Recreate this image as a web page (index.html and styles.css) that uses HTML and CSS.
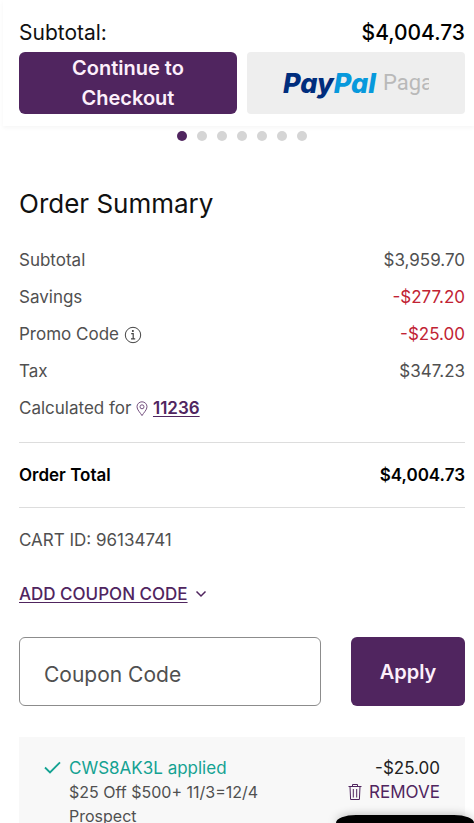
FILE: index.html
```html
<!DOCTYPE html>
<html lang="en">
<head>
  <meta charset="UTF-8" />
  <meta name="viewport" content="width=device-width, initial-scale=1.0"/>
  <title>Shopping Cart</title>
  <link rel="stylesheet" href="styles.css">
</head>
<body>
  <!-- checkout bar -->
  <header class="checkout-bar">
    <div class="bar-subtotal">
      <span>Subtotal:</span>
      <span class="bar-amount">$4,004.73</span>
    </div>
    <div class="bar-buttons">
      <button type="button" class="btn checkout-btn">Continue to<br>Checkout</button>
      <button type="button" class="paypal-btn">
        <span class="paypal-logo">Pay<span class="pal">Pal</span></span>
        <span class="paypal-text">Pagar</span>
      </button>
    </div>
  </header>

  <main>
    <div class="dots">
      <span class="dot active"></span>
      <span class="dot"></span>
      <span class="dot"></span>
      <span class="dot"></span>
      <span class="dot"></span>
      <span class="dot"></span>
      <span class="dot"></span>
    </div>

    <h1>Order Summary</h1>

    <dl class="summary">
      <div class="row"><dt>Subtotal</dt><dd>$3,959.70</dd></div>
      <div class="row"><dt>Savings</dt><dd class="discount">-$277.20</dd></div>
      <div class="row">
        <dt>Promo Code
          <button type="button" class="info-btn" aria-label="Promo code details">
            <svg width="18" height="18" viewBox="0 0 18 18" fill="none" stroke="#444">
              <circle cx="9" cy="9" r="7.7"/>
              <path d="M7.2 7.6h2v5M7 12.8h4.2" stroke-width="1.2"/>
              <circle cx="8.9" cy="5" r="1" fill="#333" stroke="none"/>
            </svg>
          </button>
        </dt>
        <dd class="discount">-$25.00</dd>
      </div>
      <div class="row"><dt>Tax</dt><dd>$347.23</dd></div>
    </dl>

    <p class="location">Calculated for
      <svg width="12" height="16" viewBox="0 0 12 16" fill="none" stroke="#75517f">
        <path d="M6 14.6C4.4 11.8 1 8.8 1 5.8a5 5 0 0 1 10 0c0 3-3.4 6-5 8.8z"/>
        <circle cx="6" cy="5.8" r="2"/>
      </svg>
      <a href="#">11236</a>
    </p>

    <div class="total">
      <span>Order Total</span>
      <span>$4,004.73</span>
    </div>

    <p class="cart-id">CART ID: 96134741</p>

    <!-- coupon -->
    <button type="button" class="coupon-toggle" aria-expanded="true">
      <span>ADD COUPON CODE</span>
      <svg width="12" height="8" viewBox="0 0 12 8" fill="none" stroke="#4f245e" stroke-width="1.5">
        <path d="M1.5 1.5L6 6l4.500-4.500"/>
      </svg>
    </button>

    <form class="coupon-form">
      <input type="text" placeholder="Coupon Code" aria-label="Coupon Code">
      <button type="button" class="btn apply-btn">Apply</button>
    </form>

    <section class="applied">
      <svg class="check" width="17" height="13" viewBox="0 0 17 13" fill="none" stroke="#14a292" stroke-width="1.8">
        <path d="M1 6.500l5 5L16 1.300"/>
      </svg>
      <div class="applied-info">
        <p class="applied-code">CWS8AK3L applied</p>
        <p class="applied-desc">$25 Off $500+ 11/3=12/4 Prospect</p>
      </div>
      <div class="applied-side">
        <span class="applied-amount">-$25.00</span>
        <button type="button" class="remove-btn">
          <svg width="14" height="18" viewBox="0 0 14 18" fill="none" stroke="#4f245e">
            <path d="M.5 3.500h13M4.500 3.500v-2h5v2M2 3.500l.6 13h8.800l.6-13M5.300 6v8.500M8.700 6v8.500"/>
          </svg>
          REMOVE
        </button>
      </div>
    </section>
  </main>

  <button type="button" class="chat-tab" aria-label="Chat"></button>
</body>
</html>
```
FILE: styles.css
```css
* {
  box-sizing: border-box;
}

body {
  margin: 0;
  height: 100vh;
  overflow: hidden;
  background: #fff;
  color: #505050;
  font-family: Inter, "Open Sans", sans-serif;
  font-size: 17px;
  line-height: 24px;
}

button {
  font-family: inherit;
  border: none;
  padding: 0;
  background: none;
  cursor: pointer;
}

p, dl, dd, h1 {
  margin: 0;
}

/* checkout bar */
.checkout-bar {
  margin-left: 3px;
  padding: 17px 9px 12px 16px;
  box-shadow: 0 2px 4px rgba(0, 0, 0, 0.04);
}

.bar-subtotal {
  display: flex;
  justify-content: space-between;
  margin-bottom: 3px;
  color: #111;
  font-size: 21px;
  line-height: 32px;
}

.bar-amount {
  color: #000;
  font-weight: 500;
}

.bar-buttons {
  display: grid;
  grid-template-columns: 1fr 1fr;
  gap: 10px;
}

.btn {
  border-radius: 6px;
  background: #50255f;
  color: #fdeffb;
  font-weight: 600;
  font-size: 20px;
}

.checkout-btn {
  height: 62px;
  line-height: 30px;
}

.paypal-btn {
  display: flex;
  align-items: center;
  height: 62px;
  padding: 0 36px;
  border-radius: 4px;
  background: #eee;
  overflow: hidden;
}

.paypal-logo {
  color: #002d7d;
  font-size: 27px;
  font-weight: 800;
  font-style: italic;
}

.pal {
  color: #0799dc;
}

.paypal-text {
  flex: 1;
  min-width: 0;
  margin-left: 7px;
  overflow: hidden;
  color: #b9b9b9;
  font-family: Roboto, sans-serif;
  font-size: 22px;
  line-height: 32px;
  text-align: left;
}

/* main column */
main {
  padding: 5px 9px 0 19px;
}

.dots {
  display: flex;
  justify-content: center;
  gap: 10px;
}

.dot {
  width: 10px;
  height: 10px;
  border-radius: 50%;
  background: #d5d5d5;
}

.dot.active {
  background: #50255f;
}

h1 {
  margin: 47px 0 28px;
  color: #111;
  font-size: 26px;
  font-weight: 400;
  line-height: 32px;
}

.row {
  display: flex;
  justify-content: space-between;
  padding-bottom: 13px;
}

.discount {
  color: #c12334;
}

.info-btn {
  vertical-align: middle;
}

.info-btn svg {
  display: block;
}

.location {
  padding-bottom: 22px;
}

.location svg {
  vertical-align: -3px;
}

a {
  color: #50255f;
  font-weight: 600;
  text-underline-offset: 2px;
}

.total {
  display: flex;
  justify-content: space-between;
  padding: 20px 0;
  border-top: 1px solid #ddd;
  border-bottom: 1px solid #ddd;
  color: #000;
  font-weight: 600;
}

.cart-id {
  margin: 20px 0 30px;
}

.coupon-toggle {
  display: flex;
  align-items: center;
  gap: 7px;
  color: #50255f;
  font-size: 17px;
  font-weight: 500;
  line-height: 24px;
}

.coupon-toggle span {
  text-decoration: underline;
  text-underline-offset: 2px;
}

.coupon-form {
  display: flex;
  gap: 30px;
  margin: 31px 0;
}

.coupon-form input {
  flex: 1;
  min-width: 0;
  height: 69px;
  padding: 6px 24px 0;
  border: 1px solid #8c8c8c;
  border-radius: 6px;
  color: #505050;
  font-family: inherit;
  font-size: 21px;
}

.coupon-form input::placeholder {
  color: #505050;
  opacity: 1;
}

.apply-btn {
  width: 114px;
}

/* applied coupon */
.applied {
  display: flex;
  padding: 19px 25px 24px;
  background: #f8f8f8;
}

.check {
  flex: none;
  margin: 5px 8px 0 0;
}

.applied-info {
  flex: 1;
}

.applied-code {
  color: #14a292;
}

.applied-desc {
  font-size: 16px;
}

.applied-side {
  display: flex;
  flex-direction: column;
  align-items: flex-end;
  margin-left: 70px;
}

.applied-amount {
  color: #222;
}

.remove-btn {
  display: flex;
  align-items: center;
  gap: 7px;
  color: #50255f;
  font-size: 17px;
  line-height: 24px;
}

/* chat tab peeking in from the bottom edge */
.chat-tab {
  position: fixed;
  right: 0;
  bottom: 0;
  width: 138px;
  height: 8px;
  border-radius: 20px 20px 0 0 / 8px 8px 0 0;
  background: #000;
  box-shadow: 0 0 10px rgba(0, 0, 0, 0.3);
}
```
